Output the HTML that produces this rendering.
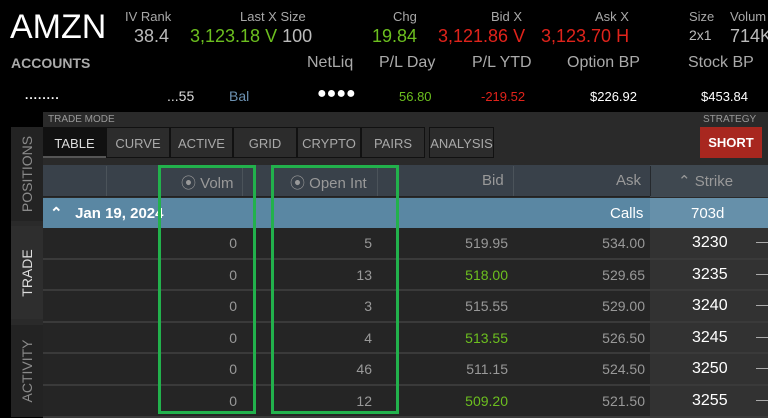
<!DOCTYPE html>
<html><head><style>
*{margin:0;padding:0;box-sizing:border-box}
body{width:768px;height:417px;background:#000;overflow:hidden;position:relative;font-family:"Liberation Sans",sans-serif;color:#ccc}
.a{position:absolute;white-space:nowrap}
.lbl{font-size:13px;color:#a8a8a8}
.g{color:#6cbf1f}.r{color:#e0231b}
.tab{position:absolute;top:127px;height:31px;border:1px solid #111;background:#2c2c2c;color:#a9a9a9;font-size:13px;text-align:center;line-height:31px}
.row{position:absolute;left:43px;width:725px;height:31.6px;border-bottom:2px solid #3a3a3a;background:#252525}
.row span{position:absolute;top:7px;font-size:14px;color:#999;text-align:right}
.row span.s{left:649px;color:#fff;font-size:16px;top:6px}
.row i{position:absolute;right:0;top:14px;width:12px;height:1px;background:#aaa}
.strk{position:absolute;left:607px;width:118px;top:0;height:100%;background:#323232}
.side{position:absolute;left:11px;width:32px;background:#232323;color:#8a8a8a;font-size:14px}
.side div{position:absolute;left:50%;top:50%;transform:translate(-50%,-50%) rotate(-90deg);white-space:nowrap}
</style></head><body>
<div class="a" style="left:10px;top:8px;font-size:34px;color:#fff">AMZN</div>
<div class="a lbl" style="left:125px;top:9px">IV Rank</div>
<div class="a" style="left:134px;top:26px;font-size:18px;color:#bbb">38.4</div>
<div class="a lbl" style="left:240px;top:9px">Last X Size</div>
<div class="a" style="left:190px;top:26px;font-size:18px"><span class="g">3,123.18 V</span> <span style="color:#bbb">100</span></div>
<div class="a lbl" style="left:393px;top:9px">Chg</div>
<div class="a g" style="left:372px;top:26px;font-size:18px">19.84</div>
<div class="a lbl" style="left:491px;top:9px">Bid X</div>
<div class="a r" style="left:438px;top:26px;font-size:18px">3,121.86 V</div>
<div class="a lbl" style="left:595px;top:9px">Ask X</div>
<div class="a r" style="left:541px;top:26px;font-size:18px">3,123.70 H</div>
<div class="a lbl" style="left:689px;top:9px">Size</div>
<div class="a" style="left:689px;top:27px;font-size:14px;color:#bbb">2x1</div>
<div class="a lbl" style="left:730px;top:9px">Volum</div>
<div class="a" style="left:730px;top:26px;font-size:18px;color:#bbb">714K</div>

<div class="a" style="left:11px;top:55px;font-size:14px;font-weight:bold;color:#aaa">ACCOUNTS</div>
<div class="a" style="left:307px;top:54px;font-size:16px;color:#aaa">NetLiq</div>
<div class="a" style="left:379px;top:54px;font-size:16px;color:#aaa">P/L Day</div>
<div class="a" style="left:472px;top:54px;font-size:16px;color:#aaa">P/L YTD</div>
<div class="a" style="left:567px;top:54px;font-size:16px;color:#aaa">Option BP</div>
<div class="a" style="left:688px;top:54px;font-size:16px;color:#aaa">Stock BP</div>
<div class="a" style="left:25px;top:88px;font-size:12px;color:#fff;letter-spacing:1px;font-weight:bold">........</div>
<div class="a" style="left:167px;top:88px;font-size:14px;color:#ddd">...55</div>
<div class="a" style="left:229px;top:88px;font-size:14px;color:#6c92b3">Bal</div>
<div class="a" style="left:317px;top:85px;font-size:16px;color:#fff">●●●●</div>
<div class="a g" style="left:399px;top:89px;font-size:13px">56.80</div>
<div class="a r" style="left:481px;top:89px;font-size:13px">-219.52</div>
<div class="a" style="left:590px;top:89px;font-size:13px;color:#fff">$226.92</div>
<div class="a" style="left:701px;top:89px;font-size:13px;color:#fff">$453.84</div>

<div class="a" style="left:11px;top:112px;width:757px;height:305px;background:#2a2a2a"></div>
<div class="a" style="left:0;top:112px;width:11px;height:305px;background:#000"></div>
<div class="a" style="left:11px;top:112px;width:32px;height:15px;background:#000"></div>
<div class="a" style="left:48px;top:114px;font-size:10px;color:#999">TRADE MODE</div>
<div class="a" style="left:703px;top:114px;font-size:10px;color:#999">STRATEGY</div>
<div class="a" style="left:43px;top:127px;width:63px;height:31px;background:#111;color:#ddd;font-size:13px;text-align:center;line-height:34px;border-bottom:2px solid #555">TABLE</div>
<div class="tab" style="left:106px;width:64px">CURVE</div>
<div class="tab" style="left:170px;width:63px">ACTIVE</div>
<div class="tab" style="left:233px;width:64px">GRID</div>
<div class="tab" style="left:297px;width:64px">CRYPTO</div>
<div class="tab" style="left:361px;width:64px">PAIRS</div>
<div class="tab" style="left:429px;width:65px">ANALYSIS</div>
<div class="a" style="left:700px;top:127px;width:62px;height:31px;background:#a8271f;color:#fff;font-weight:bold;font-size:13px;text-align:center;line-height:31px">SHORT</div>

<div class="side" style="top:127px;height:94px"><div>POSITIONS</div></div>
<div class="side" style="top:226px;height:93px;background:#2e2e2e;color:#ddd"><div>TRADE</div></div>
<div class="side" style="top:325px;height:92px"><div>ACTIVITY</div></div>

<div class="a" style="left:43px;top:165px;width:725px;height:32px;background:#39414a;border-bottom:1px solid #222"></div>
<div class="a" style="left:650px;top:165px;width:118px;height:32px;background:#3f4850"></div>
<div class="a" style="left:106px;top:166px;width:1px;height:30px;background:#4b535a"></div>
<div class="a" style="left:242px;top:166px;width:1px;height:30px;background:#4b535a"></div>
<div class="a" style="left:377px;top:166px;width:1px;height:30px;background:#4b535a"></div>
<div class="a" style="left:513px;top:166px;width:1px;height:30px;background:#4b535a"></div>
<div class="a" style="left:650px;top:166px;width:1px;height:30px;background:#25292d"></div>
<div class="a" style="left:181px;top:172px;font-size:15px;color:#999">⦿ Volm</div>
<div class="a" style="left:290px;top:172px;font-size:15px;color:#999">⦿ Open Int</div>
<div class="a" style="left:482px;top:172px;font-size:15px;color:#999">Bid</div>
<div class="a" style="left:616px;top:172px;font-size:15px;color:#999">Ask</div>
<div class="a" style="left:678px;top:172px;font-size:15px;color:#999">⌃ Strike</div>

<div class="a" style="left:43px;top:198px;width:725px;height:30px;background:#5a87a3"></div>
<div class="a" style="left:650px;top:198px;width:118px;height:30px;background:#6690aa"></div>
<div class="a" style="left:50px;top:204px;font-size:15px;color:#fff;font-weight:bold">⌃&nbsp;&nbsp; Jan 19, 2024</div>
<div class="a" style="left:610px;top:205px;font-size:15px;color:#fff">Calls</div>
<div class="a" style="left:691px;top:205px;font-size:15px;color:#fff">703d</div>

<div class="row" style="top:228px"><div class="strk"></div><span style="right:531px">0</span><span style="right:396px">5</span><span style="right:260px">519.95</span><span style="right:123px">534.00</span><span class="s">3230</span><i></i></div>
<div class="row" style="top:259.6px"><div class="strk"></div><span style="right:531px">0</span><span style="right:396px">13</span><span style="right:260px;color:#6cbf1f">518.00</span><span style="right:123px">529.65</span><span class="s">3235</span><i></i></div>
<div class="row" style="top:291.2px"><div class="strk"></div><span style="right:531px">0</span><span style="right:396px">3</span><span style="right:260px">515.55</span><span style="right:123px">529.00</span><span class="s">3240</span><i></i></div>
<div class="row" style="top:322.8px"><div class="strk"></div><span style="right:531px">0</span><span style="right:396px">4</span><span style="right:260px;color:#6cbf1f">513.55</span><span style="right:123px">526.50</span><span class="s">3245</span><i></i></div>
<div class="row" style="top:354.4px"><div class="strk"></div><span style="right:531px">0</span><span style="right:396px">46</span><span style="right:260px">511.15</span><span style="right:123px">524.50</span><span class="s">3250</span><i></i></div>
<div class="row" style="top:386px"><div class="strk"></div><span style="right:531px">0</span><span style="right:396px">12</span><span style="right:260px;color:#6cbf1f">509.20</span><span style="right:123px">521.50</span><span class="s">3255</span><i></i></div>

<div class="a" style="left:158px;top:165px;width:98px;height:249px;border:3px solid #22b14c"></div>
<div class="a" style="left:271px;top:165px;width:128px;height:249px;border:3px solid #22b14c"></div>
</body></html>
